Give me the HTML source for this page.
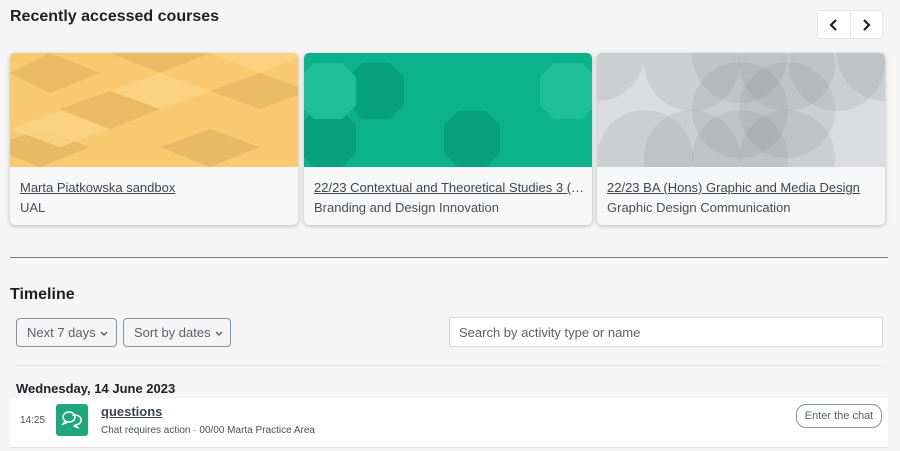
<!DOCTYPE html>
<html><head><style>
*{box-sizing:border-box;margin:0;padding:0}
body{width:900px;height:451px;background:#f5f5f5;font-family:"Liberation Sans",sans-serif;color:#1d2125;position:relative;overflow:hidden}
.abs{position:absolute}
h2{position:absolute;font-size:16px;font-weight:bold;color:#1d2125}
.card{position:absolute;top:53px;width:288px;height:172px;background:#f7f7f7;border-radius:5px;box-shadow:0 1px 4px rgba(0,0,0,.25);overflow:hidden}
.card svg{display:block}
.card .t{position:absolute;left:10px;top:127px;font-size:13px;color:#3d4650;text-decoration:underline;white-space:nowrap;overflow:hidden;text-overflow:ellipsis;width:272px}
.card .s{position:absolute;left:10px;top:147px;font-size:13px;color:#4a4f55}
.btn{position:absolute;top:318px;height:29px;border:1px solid #8a9097;border-radius:4px;font-size:13px;color:#5a6068;padding:6px 10px;background:#f5f5f5;white-space:nowrap}
.btn svg{vertical-align:middle;margin-left:4px}
</style></head><body>
<h2 style="left:10px;top:8px">Recently accessed courses</h2>
<div class="abs" style="left:817px;top:10px;width:66px;height:29px;background:#fff;border:1px solid #e4e4e4;border-radius:3px">
<div class="abs" style="left:32px;top:0;width:1px;height:27px;background:#e4e4e4"></div>
<svg class="abs" style="left:10px;top:8px" width="12" height="12"><path d="M8 1L3 6l5 5" stroke="#1d2125" stroke-width="2.2" fill="none"/></svg>
<svg class="abs" style="left:42px;top:8px" width="12" height="12"><path d="M4 1l5 5-5 5" stroke="#1d2125" stroke-width="2.2" fill="none"/></svg>
</div>

<div class="card" style="left:10px">
<svg width="288" height="114"><rect width="288" height="114" fill="#f8c96f"/>
<g fill="#e8b964" opacity=".9"><path d="M0 20L40 0 90 20 40 40Z"/><path d="M50 56L100 38 150 56 100 76Z"/><path d="M150 94L200 76 250 94 200 114Z"/><path d="M-20 94L30 76 80 94 30 114Z"/><path d="M200 38L250 20 300 38 250 56Z"/><path d="M100 0L150 -18 200 0 150 20Z"/></g>
<g fill="#fbd586" opacity=".8"><path d="M100 38L150 20 200 38 150 56Z"/><path d="M0 76L50 58 100 76 50 94Z"/><path d="M200 0L250 -18 300 0 250 20Z"/></g></svg>
<div class="t">Marta Piatkowska sandbox</div><div class="s">UAL</div></div>

<div class="card" style="left:304px">
<svg width="288" height="114"><rect width="288" height="114" fill="#0cb28a"/>
<g fill="#06a07c"><path d="M58 10h28l14 14v28l-14 14H58L44 52V24Z"/><path d="M10 58h28l14 14v28l-14 14H10L-4 100V72Z"/><path d="M154 58h28l14 14v28l-14 14h-28l-14-14V72Z"/></g>
<g fill="#1ebf97"><path d="M10 10h28l14 14v28l-14 14H10L-4 52V24Z"/><path d="M250 10h28l14 14v28l-14 14h-28l-14-14V24Z"/></g></svg>
<div class="t">22/23 Contextual and Theoretical Studies 3 (Ro…</div><div class="s">Branding and Design Innovation</div></div>

<div class="card" style="left:597px">
<svg width="288" height="114"><rect width="288" height="114" fill="#dadcdf"/>
<g fill="#6f7275" fill-opacity=".12"><circle cx="0" cy="0" r="48"/><circle cx="95" cy="10" r="48"/><circle cx="143" cy="2" r="48"/><circle cx="190" cy="10" r="48"/><circle cx="143" cy="57" r="48"/><circle cx="190" cy="57" r="48"/><circle cx="240" cy="10" r="48"/><circle cx="48" cy="105" r="48"/><circle cx="95" cy="105" r="48"/><circle cx="190" cy="105" r="48"/><circle cx="143" cy="105" r="48"/><circle cx="288" cy="0" r="48"/></g></svg>
<div class="t">22/23 BA (Hons) Graphic and Media Design</div><div class="s">Graphic Design Communication</div></div>

<div class="abs" style="left:10px;top:257px;width:878px;height:1px;background:#7a7f85"></div>
<h2 style="left:10px;top:286px">Timeline</h2>
<div class="btn" style="left:16px;width:101px">Next 7 days<svg width="8" height="6"><path d="M1 1l3 3 3-3" stroke="#5a6068" stroke-width="1.4" fill="none"/></svg></div>
<div class="btn" style="left:123px;width:108px">Sort by dates<svg width="8" height="6"><path d="M1 1l3 3 3-3" stroke="#5a6068" stroke-width="1.4" fill="none"/></svg></div>
<div class="abs" style="left:449px;top:317px;width:434px;height:30px;background:#fff;border:1px solid #d6d9dc;border-radius:2px;font-size:13px;color:#5a6068;padding:7px 9px">Search by activity type or name</div>
<div class="abs" style="left:16px;top:365px;width:866px;height:1px;background:#e2e2e2"></div>
<div class="abs" style="left:16px;top:381px;font-size:13px;font-weight:bold">Wednesday, 14 June 2023</div>
<div class="abs" style="left:10px;top:398px;width:878px;height:50px;background:#fff;border-bottom:1px solid #e2e2e2"></div>
<div class="abs" style="left:20px;top:415px;font-size:10px;color:#4a4f55">14:25</div>
<div class="abs" style="left:56px;top:404px;width:32px;height:32px;background:#1fa67a;border-radius:3px">
<svg width="32" height="32"><g fill="none" stroke="#fff" stroke-width="1.5"><ellipse cx="13" cy="13" rx="6" ry="5"/><path d="M9 17l-2 3 4-1.5"/><path d="M16.5 11.5a6 5 0 1 1 3 9.5l2 2.5-4-1.5"/></g></svg></div>
<div class="abs" style="left:101px;top:404px;font-size:13px;font-weight:bold;text-decoration:underline;color:#3d4650">questions</div>
<div class="abs" style="left:101px;top:425px;font-size:10px;color:#4a4f55">Chat requires action · 00/00 Marta Practice Area</div>
<div class="abs" style="left:796px;top:404px;width:86px;height:24px;border:1px solid #8a9097;border-radius:10px;font-size:11px;color:#5a6068;padding:5px 0;text-align:center">Enter the chat</div>
</body></html>
